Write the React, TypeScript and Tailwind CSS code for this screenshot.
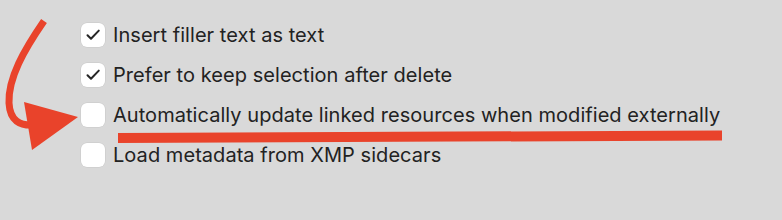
import React from 'react';

const items = [
  { label: 'Insert filler text as text', checked: true },
  { label: 'Prefer to keep selection after delete', checked: true },
  { label: 'Automatically update linked resources when modified externally', checked: false },
  { label: 'Load metadata from XMP sidecars', checked: false },
];

function Checkbox({ checked }: { checked: boolean }) {
  return (
    <div className="w-6 h-6 rounded-[6px] bg-white shadow-[0_0_0_0.5px_rgba(0,0,0,0.08)] flex items-center justify-center shrink-0">
      {checked && (
        <svg width="24" height="24" viewBox="0 0 24 24" fill="none">
          <path d="M6.5 12.3 L10 15.8 L17.8 7.6" stroke="#262626" strokeWidth="2" strokeLinecap="round" strokeLinejoin="round" />
        </svg>
      )}
    </div>
  );
}

export default function App() {
  return (
    <div className="relative w-[782px] h-[220px] bg-[#d9d9d9] overflow-hidden" style={{ fontFamily: 'Inter, "Noto Sans", sans-serif' }}>
      <ul className="flex flex-col gap-4 pt-[23px] pl-[81px]">
        {items.map((item) => (
          <li key={item.label} className="flex items-center gap-2 h-6">
            <Checkbox checked={item.checked} />
            <span className="text-[20px] leading-6 text-[#222222] tracking-[0.05px]">{item.label}</span>
          </li>
        ))}
      </ul>

      {/* annotation overlay */}
      <svg className="absolute inset-0 pointer-events-none" width="782" height="220" viewBox="0 0 782 220">
        <path d="M44 21 C 24 50, 8 78, 9 103 C 10 121, 20 126, 34 125" stroke="#e9432b" strokeWidth="7" fill="none" />
        <polygon points="24,102 78,117 32,150" fill="#e9432b" />
        <polygon points="118,133 722,130.5 722,140.5 118,143" fill="#e9432b" />
      </svg>
    </div>
  );
}
